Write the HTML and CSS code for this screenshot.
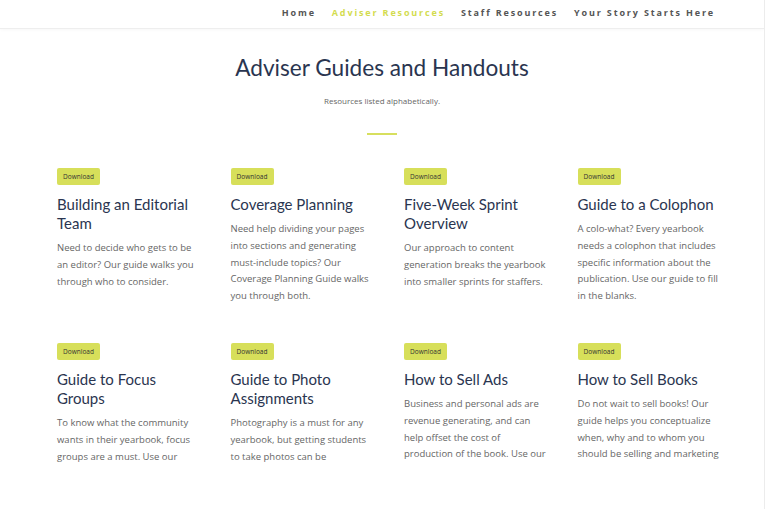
FILE: index.html
```html
<!DOCTYPE html>
<html lang="en">
<head>
<meta charset="utf-8">
<title>Adviser Guides and Handouts</title>
<link rel="stylesheet" href="styles.css">
</head>
<body>
<div class="page">
  <header class="topbar">
    <nav class="nav">
      <a class="nav-item" href="#">Home</a>
      <a class="nav-item active" href="#">Adviser Resources</a>
      <a class="nav-item" href="#">Staff Resources</a>
      <a class="nav-item" href="#">Your Story Starts Here</a>
    </nav>
  </header>
  <main class="main">
    <section class="intro">
      <h1 class="title">Adviser Guides and Handouts</h1>
      <p class="subtitle">Resources listed alphabetically.</p>
      <div class="divider"></div>
    </section>
    <section class="grid">
      <article class="card">
        <a class="btn" href="#">Download</a>
        <h2 class="card-title">Building an Editorial Team</h2>
        <p class="card-text">Need to decide who gets to be an editor? Our guide walks you through who to consider.</p>
      </article>
      <article class="card">
        <a class="btn" href="#">Download</a>
        <h2 class="card-title">Coverage Planning</h2>
        <p class="card-text">Need help dividing your pages into sections and generating must-include topics? Our Coverage Planning Guide walks you through both.</p>
      </article>
      <article class="card">
        <a class="btn" href="#">Download</a>
        <h2 class="card-title">Five-Week Sprint Overview</h2>
        <p class="card-text">Our approach to content generation breaks the yearbook into smaller sprints for staffers.</p>
      </article>
      <article class="card">
        <a class="btn" href="#">Download</a>
        <h2 class="card-title">Guide to a Colophon</h2>
        <p class="card-text">A colo-what? Every yearbook needs a colophon that includes specific information about the publication. Use our guide to fill in the blanks.</p>
      </article>
      <article class="card">
        <a class="btn" href="#">Download</a>
        <h2 class="card-title">Guide to Focus Groups</h2>
        <p class="card-text">To know what the community wants in their yearbook, focus groups are a must. Use our</p>
      </article>
      <article class="card">
        <a class="btn" href="#">Download</a>
        <h2 class="card-title">Guide to Photo Assignments</h2>
        <p class="card-text">Photography is a must for any yearbook, but getting students to take photos can be</p>
      </article>
      <article class="card">
        <a class="btn" href="#">Download</a>
        <h2 class="card-title">How to Sell Ads</h2>
        <p class="card-text">Business and personal ads are revenue generating, and can help offset the cost of production of the book. Use our</p>
      </article>
      <article class="card">
        <a class="btn" href="#">Download</a>
        <h2 class="card-title">How to Sell Books</h2>
        <p class="card-text">Do not wait to sell books! Our guide helps you conceptualize when, why and to whom you should be selling and marketing</p>
      </article>
    </section>
  </main>
</div>
</body>
</html>
```

FILE: styles.css
```css
* { box-sizing: border-box; }
html, body { margin: 0; padding: 0; background: #fff; }
body { font-family: "Open Sans", "Liberation Sans", sans-serif; color: #666; }

.page {
  width: 765px;
  height: 509px;
  border-right: 1px solid #ececec;
  overflow: hidden;
}

.topbar {
  height: 29px;
  border-bottom: 1px solid #eeeeee;
  box-shadow: 0 1px 3px rgba(0,0,0,0.03);
  display: flex;
  justify-content: flex-end;
  align-items: center;
  padding-right: 49px;
}
.nav { display: flex; gap: 16px; align-items: center; padding-bottom: 3px; }
.nav-item {
  font-family: "Open Sans", sans-serif;
  font-weight: 700;
  font-size: 9px;
  letter-spacing: 1.85px;
  color: #555;
  text-decoration: none;
}
.nav-item.active { color: #d3dc4f; }

.main { padding-top: 25px; }
.intro { display: flex; flex-direction: column; align-items: center; }
.title {
  margin: 0;
  font-family: Lato, "Noto Sans", sans-serif;
  font-weight: 400;
  font-size: 22.6px;
  line-height: 28px;
  color: #2a3550;
}
.subtitle {
  margin: 13px 0 0;
  font-size: 8px;
  line-height: 12px;
  color: #666;
}
.divider {
  margin-top: 26px;
  width: 30px;
  height: 2px;
  background: #d7df5e;
}

.grid {
  margin: 33px 0 0 57px;
  display: grid;
  grid-template-columns: repeat(4, 146px);
  column-gap: 27.5px;
  row-gap: 38px;
}
.card { display: flex; flex-direction: column; align-items: flex-start; }
.btn {
  display: block;
  width: 43px;
  height: 17px;
  line-height: 17px;
  text-align: center;
  background: #d7df5a;
  border-radius: 2px;
  font-size: 6.5px;
  color: #333;
  text-decoration: none;
}
.card-title {
  margin: 10px 0 0;
  font-family: Lato, "Noto Sans", sans-serif;
  font-weight: 400;
  font-size: 15px;
  line-height: 19px;
  color: #2a3550;
}
.card-text {
  margin: 7px 0 0;
  font-size: 9.5px;
  line-height: 16.8px;
  color: #666;
}
```
